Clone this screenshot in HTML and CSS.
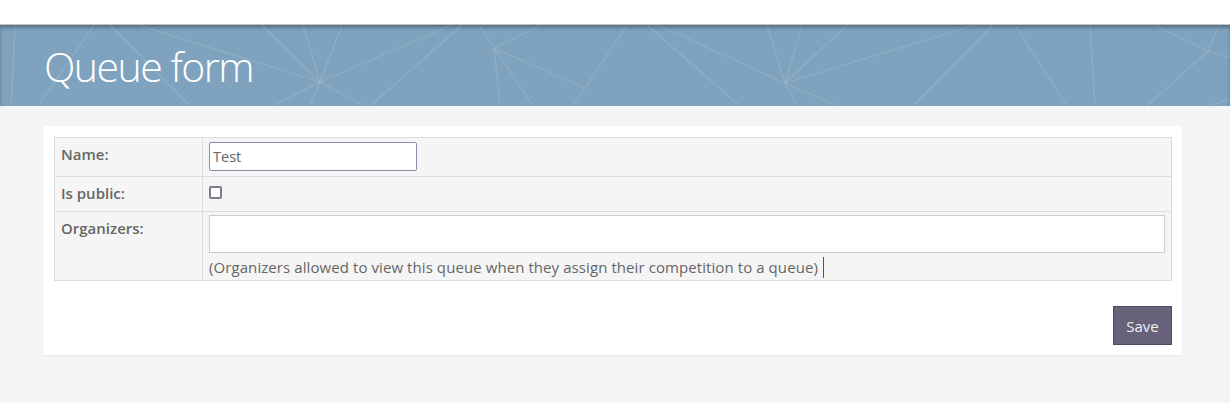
FILE: index.html
```html
<!DOCTYPE html>
<html>
<head>
<meta charset="utf-8">
<title>Queue form</title>
<link rel="stylesheet" href="styles.css">
</head>
<body>
<div class="topbar"></div>
<header class="banner">
  <svg class="banner-lines" viewBox="0 0 1230 81" preserveAspectRatio="none" aria-hidden="true">
    <g stroke="#ffffff" stroke-opacity="0.12" stroke-width="1.3" fill="none">
      <line x1="15" y1="0" x2="11" y2="81"/>
      <line x1="94" y1="0" x2="38" y2="81"/>
      <line x1="110" y1="0" x2="190" y2="81"/>
      <line x1="138" y1="0" x2="320" y2="57"/>
      <line x1="320" y1="57" x2="262" y2="0"/>
      <line x1="320" y1="57" x2="303" y2="0"/>
      <line x1="320" y1="57" x2="342" y2="0"/>
      <line x1="320" y1="57" x2="452" y2="0"/>
      <line x1="320" y1="57" x2="273" y2="81"/>
      <line x1="320" y1="57" x2="310" y2="81"/>
      <line x1="320" y1="57" x2="365" y2="81"/>
      <line x1="369" y1="82" x2="462" y2="0"/>
      <line x1="494" y1="23" x2="479" y2="0"/>
      <line x1="494" y1="23" x2="541" y2="0"/>
      <line x1="494" y1="23" x2="500" y2="81"/>
      <line x1="494" y1="23" x2="533" y2="81"/>
      <line x1="494" y1="23" x2="585" y2="63"/>
      <line x1="585" y1="63" x2="627" y2="0"/>
      <line x1="585" y1="63" x2="573" y2="81"/>
      <line x1="647" y1="0" x2="740" y2="81"/>
      <line x1="658" y1="0" x2="785" y2="58"/>
      <line x1="785" y1="58" x2="767" y2="0"/>
      <line x1="785" y1="58" x2="802" y2="0"/>
      <line x1="785" y1="58" x2="847" y2="0"/>
      <line x1="785" y1="58" x2="975" y2="0"/>
      <line x1="785" y1="58" x2="838" y2="81"/>
      <line x1="785" y1="58" x2="797" y2="81"/>
      <line x1="913" y1="81" x2="993" y2="0"/>
      <line x1="1015" y1="0" x2="1067" y2="81"/>
      <line x1="1090" y1="0" x2="1095" y2="81"/>
      <line x1="1155" y1="0" x2="1208" y2="26"/>
      <line x1="1208" y1="26" x2="1219" y2="0"/>
      <line x1="1208" y1="26" x2="1230" y2="33"/>
      <line x1="1208" y1="26" x2="1147" y2="81"/>
      <line x1="1208" y1="81" x2="1230" y2="74"/>
    </g>
  </svg>
  <h1 class="title">Queue form</h1>
</header>
<main class="page">
  <form class="card">
    <table class="form-table">
      <tr class="row-name">
        <th>Name:</th>
        <td><input class="text-input" type="text" value="Test"></td>
      </tr>
      <tr class="row-public">
        <th>Is public:</th>
        <td><input class="checkbox" type="checkbox"></td>
      </tr>
      <tr class="row-organizers">
        <th>Organizers:</th>
        <td>
          <div class="multi-input"></div>
          <div class="help">(Organizers allowed to view this queue when they assign their competition to a queue)<span class="caret"></span></div>
        </td>
      </tr>
    </table>
    <div class="actions">
      <button class="save" type="button">Save</button>
    </div>
  </form>
</main>
</body>
</html>
```

FILE: styles.css
```css
html, body {
  margin: 0;
  padding: 0;
}
body {
  background: #f5f5f5;
  font-family: "Open Sans", "Noto Sans", sans-serif;
  color: #666;
  height: 403px;
}
.topbar {
  height: 24px;
  background: #ffffff;
}
.banner {
  position: relative;
  height: 81px;
  background: #7fa3bf;
  border-top: 1px solid #c3c3c3;
  box-shadow: inset 0 3px 4px -1px rgba(40, 50, 60, 0.55);
  overflow: hidden;
}
.banner-lines {
  position: absolute;
  left: 0;
  top: 0;
  width: 100%;
  height: 100%;
}
.title {
  position: relative;
  margin: 0;
  padding: 2px 0 0 44px;
  line-height: 79px;
  font-size: 41px;
  font-weight: 300;
  color: #ffffff;
  letter-spacing: -1.5px;
}
.page {
  padding: 20px 48px 0 43px;
}
.card {
  display: block;
  background: #ffffff;
  padding: 11px 10px 10px 11px;
  box-shadow: 0 1px 2px rgba(0, 0, 0, 0.05);
}
.form-table {
  width: 100%;
  border-collapse: collapse;
  background: #f5f5f5;
}
.form-table th,
.form-table td {
  border: 1px solid #dddddd;
  vertical-align: top;
}
.form-table th {
  width: 135px;
  text-align: left;
  font-size: 15px;
  font-weight: 600;
  line-height: 20px;
  padding: 6px 6px;
  color: #666;
}
.form-table td {
  padding: 4px 6px;
}
.row-name td {
  padding-bottom: 5px;
}
.text-input {
  display: block;
  box-sizing: border-box;
  width: 208px;
  height: 29px;
  margin: 0;
  padding: 0 3px;
  border: 1px solid #8f8ca5;
  border-radius: 2px;
  background: #ffffff;
  font-family: "Open Sans", "Noto Sans", sans-serif;
  font-size: 14.5px;
  color: #666;
  outline: none;
}
.checkbox {
  appearance: none;
  -webkit-appearance: none;
  display: block;
  box-sizing: border-box;
  width: 13px;
  height: 13px;
  margin: 5px 0 8px 0;
  border: 2px solid #7e7a90;
  border-radius: 2px;
  background: #ffffff;
}
.row-organizers td {
  padding-top: 3px;
  padding-bottom: 1px;
}
.multi-input {
  box-sizing: border-box;
  height: 38px;
  background: #ffffff;
  border: 1px solid #cccccc;
}
.help {
  margin-top: 2px;
  font-size: 15px;
  line-height: 24px;
  letter-spacing: 0.08px;
  color: #666;
  white-space: nowrap;
}
.caret {
  display: inline-block;
  width: 1px;
  height: 21px;
  background: #555;
  margin-left: 5px;
  vertical-align: -5px;
}
.actions {
  display: flex;
  justify-content: flex-end;
  padding-top: 25px;
}
.save {
  box-sizing: border-box;
  width: 59px;
  height: 39px;
  margin: 0;
  padding: 0;
  background: #67627a;
  border: 1px solid #4d4960;
  color: #f0f0f0;
  font-family: "Open Sans", "Noto Sans", sans-serif;
  font-size: 15px;
  cursor: pointer;
}
```
